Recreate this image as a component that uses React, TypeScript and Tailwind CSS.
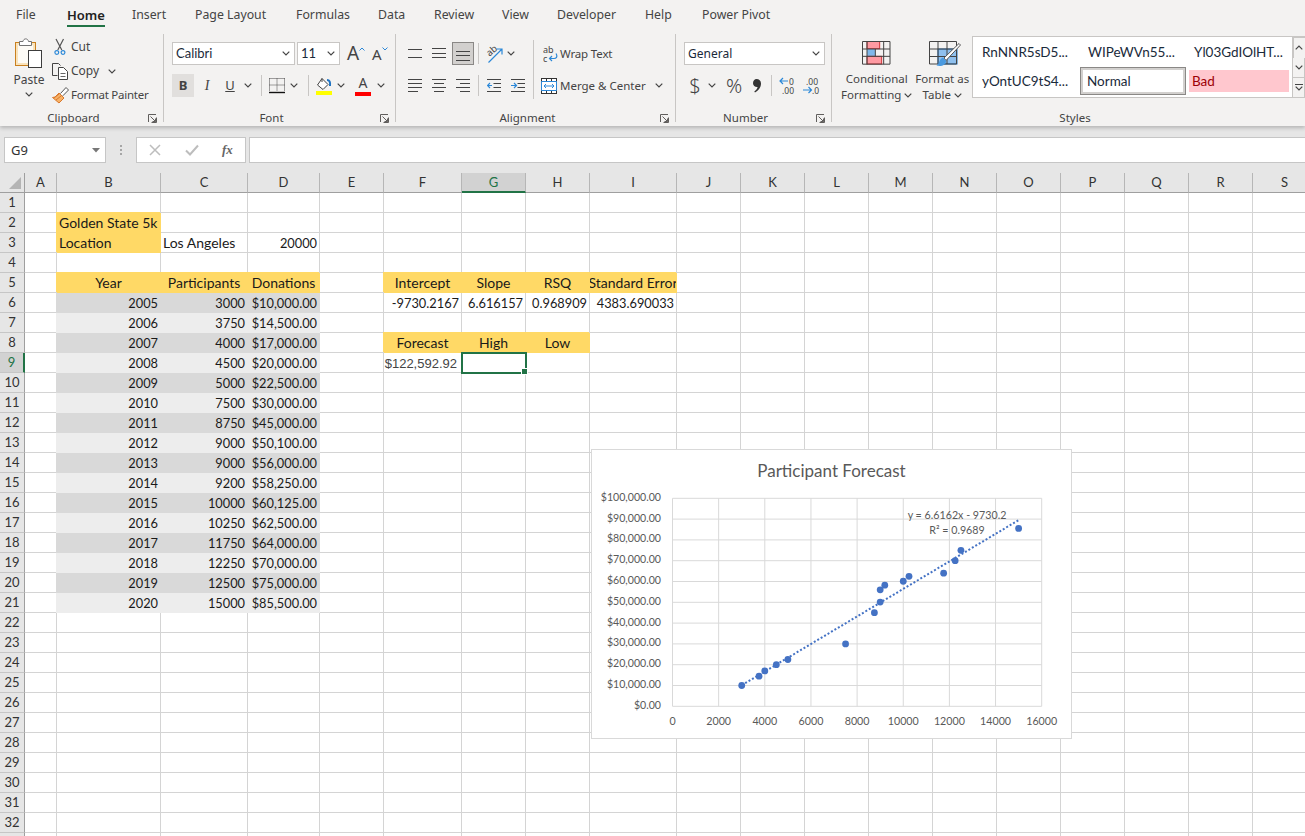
import React from "react";

const Chevron = ({ c = "#444" }: { c?: string }) => (
  <svg width="8" height="5" viewBox="0 0 8 5" className="shrink-0">
    <path d="M0.7 0.7 L4 4 L7.3 0.7" fill="none" stroke={c} strokeWidth="1.2" />
  </svg>
);

const Launcher = () => (
  <svg width="9" height="9" viewBox="0 0 9 9" className="absolute right-[6px] top-[4px]">
    <path d="M0.5 8V0.5H8M8.5 3.5V8.5H3.5M2.5 2.5L7.5 7.5M4.5 7.5H7.5V4.5" fill="none" stroke="#605e5c" strokeWidth="1" />
  </svg>
);

const Sep = () => <div className="self-start mt-[4px] h-[88px] w-px shrink-0 bg-[#c8c6c4]" />;
const MiniSep = () => <div className="h-[21px] w-px shrink-0 bg-[#c8c6c4]" />;

const GroupLabel = ({ text, launcher = true }: { text: string; launcher?: boolean }) => (
  <div className={`relative h-[16px] flex items-center justify-center text-[11.5px] text-[#444] ${launcher ? "pr-[16px]" : "pl-[13px]"}`}>
    {text}
    {launcher && <Launcher />}
  </div>
);

const Lines = ({ rows }: { rows: [number, number, number][] }) => (
  <svg width="14" height="16" viewBox="0 0 14 16">
    {rows.map(([a, b, y], i) => (
      <line key={i} x1={a} x2={b} y1={y} y2={y} stroke="#444" strokeWidth="1" />
    ))}
  </svg>
);

const PasteIcon = () => (
  <svg width="30" height="32" viewBox="16 37 30 32">
    <rect x="17.5" y="42.5" width="20" height="23" fill="#f9e3bb" stroke="#c9801f" />
    <rect x="20" y="45" width="15" height="18" fill="#fdfbf6" />
    <path d="M21.5 45.5V41.5H25C25.5 38 30 38 30.5 41.5H33.5V45.5Z" fill="#fff" stroke="#737373" />
    <rect x="30.5" y="50.5" width="13" height="17" fill="#fff" stroke="#3c3c3c" />
  </svg>
);

const CutIcon = () => (
  <svg width="18" height="18" viewBox="51 36 18 18">
    <path d="M56 37L61.8 48M63.5 37L57.8 48" stroke="#555" strokeWidth="1.2" fill="none" />
    <circle cx="56.8" cy="50.5" r="1.9" fill="none" stroke="#2b88d8" strokeWidth="1.2" />
    <circle cx="63" cy="50.5" r="1.9" fill="none" stroke="#2b88d8" strokeWidth="1.2" />
  </svg>
);

const CopyIcon = () => (
  <svg width="18" height="18" viewBox="51 60 18 18">
    <path d="M57.5 73.5H52.5V61.5H58.5L60.5 63.5" fill="none" stroke="#444" />
    <path d="M58.5 65.5H63.5L67.5 69.5V77.5H58.5Z" fill="#fff" stroke="#444" />
    <path d="M60.5 71.5H65.5M60.5 74.5H65.5" stroke="#666" />
  </svg>
);

const BrushIcon = () => (
  <svg width="19" height="18" viewBox="51 85 19 18">
    <path d="M60.5 92.5L66 86.5L68.5 89L62.8 94.8" fill="#fff" stroke="#555" />
    <path d="M59 92L64 97L59 102L52.5 96.5L55 96Z" fill="#f7b267" stroke="#d9782d" />
    <path d="M54 97L59 93M56 99L61 95" stroke="#d9782d" />
  </svg>
);

const BorderIcon = () => (
  <svg width="16" height="16" viewBox="0 0 16 16">
    <path d="M0.5 0.5H15.5M0.5 0.5V13M15.5 0.5V13M8 0.5V13M0.5 7H15.5" stroke="#444" strokeDasharray="1 1" fill="none" />
    <path d="M0 14.5H16" stroke="#111" strokeWidth="1.4" />
  </svg>
);

const FillIcon = () => (
  <svg width="17" height="18" viewBox="0 0 17 18">
    <path d="M6 1.5L12 7.5L7 12.5L1.5 8Z" fill="#fff" stroke="#444" />
    <path d="M6 1.5V5" stroke="#444" />
    <path d="M11 3C13.5 3 14.5 5 14 9" stroke="#1f73c2" strokeWidth="2" fill="none" />
    <rect x="0" y="14" width="16" height="4" fill="#ffff00" />
  </svg>
);

const OrientIcon = () => (
  <svg width="20" height="22" viewBox="-1 -1 20 22" className="-m-px">
    <text x="1" y="10" transform="rotate(-40 6 8)" className="font-['Noto_Sans',sans-serif] text-[9.5px] fill-[#444]">ab</text>
    <path d="M2.5 18.5L15.5 5.5M10.5 5H16V10.5" stroke="#2b88d8" strokeWidth="1.2" fill="none" />
  </svg>
);

const WrapIcon = () => (
  <svg width="15" height="20" viewBox="0 -1 15 20" className="-my-px">
    <text x="0" y="7.5" className="font-['Noto_Sans',sans-serif] text-[9px] fill-[#444]">ab</text>
    <text x="0" y="16.5" className="font-['Noto_Sans',sans-serif] text-[9px] fill-[#444]">c</text>
    <path d="M13 8.5C15 12 13 13.5 11 13.5H6.5M9 11L6.5 13.5L9 16" stroke="#2b88d8" strokeWidth="1.2" fill="none" />
  </svg>
);

const MergeIcon = () => (
  <svg width="16" height="16" viewBox="0 0 16 16">
    <rect x="0.5" y="0.5" width="15" height="15" fill="#fff" stroke="#333" />
    <path d="M5.5 0.5V3.5M10.5 0.5V3.5M5.5 12.5V15.5M10.5 12.5V15.5" stroke="#333" />
    <path d="M0.5 3.5H15.5V12.5H0.5Z" fill="#fff" stroke="#2b88d8" />
    <path d="M3 8H13M5 6L3 8L5 10M11 6L13 8L11 10" stroke="#2b88d8" fill="none" />
  </svg>
);

const IndentIcon = ({ dir }: { dir: "l" | "r" }) => (
  <svg width="14" height="14" viewBox="0 0 14 14">
    <path d="M0 0.5H14M6.5 4.5H14M6.5 8.5H14M0 12.5H14" stroke="#444" />
    {dir === "l" ? (
      <path d="M5 6.5H0.5M3 4L0.5 6.5L3 9" stroke="#2b88d8" strokeWidth="1.2" fill="none" />
    ) : (
      <path d="M0 6.5H5M3 4L5.5 6.5L3 9" stroke="#2b88d8" strokeWidth="1.2" fill="none" />
    )}
  </svg>
);

const CommaIcon = () => (
  <svg width="8" height="14" viewBox="0 0 8 14">
    <path d="M3.5 0C6 0 8 1.6 8 4.5C8 8.5 5 12 2 13.5L1.3 12.6C3 11.3 4.3 9.8 4.6 8C2.2 8.3 0 6.8 0 4.2C0 1.8 1.6 0 3.5 0Z" fill="#333" />
  </svg>
);

const DecIcon = ({ more }: { more: boolean }) => (
  <svg width="17" height="20" viewBox="0 -1 17 20" className="-my-px">
    {more ? (
      <>
        <path d="M9 4H1.2M4 1L1 4L4 7" stroke="#2b88d8" strokeWidth="1.2" fill="none" />
        <text x="10" y="7.5" className="font-['Noto_Sans',sans-serif] text-[8.5px] fill-[#444]">0</text>
        <text x="3" y="16.5" className="font-['Noto_Sans',sans-serif] text-[8.5px] fill-[#444]">.00</text>
      </>
    ) : (
      <>
        <text x="3" y="7.5" className="font-['Noto_Sans',sans-serif] text-[8.5px] fill-[#444]">.00</text>
        <path d="M0 13H8M5.5 10L8.5 13L5.5 16" stroke="#2b88d8" strokeWidth="1.2" fill="none" />
        <text x="9" y="16.5" className="font-['Noto_Sans',sans-serif] text-[8.5px] fill-[#444]">.0</text>
      </>
    )}
  </svg>
);

const CondIcon = () => (
  <svg width="29" height="24" viewBox="0 0 87 72">
    <rect x="15" y="1" width="38" height="22" fill="#ff9aa2" stroke="#d13438" strokeWidth="3" />
    <rect x="15" y="24" width="25" height="22" fill="#7fb7ea" />
    <rect x="15" y="46" width="44" height="23" fill="#ff9aa2" stroke="#d13438" strokeWidth="3" />
    <path d="M1.5 1.5H84V69.5H1.5ZM1.5 24H84M1.5 46H84M15 1V70M40 24V46M65 1V70" fill="none" stroke="#444" strokeWidth="3" />
  </svg>
);

const TableIcon = () => (
  <svg width="32" height="26" viewBox="0 0 32 26">
    <rect x="9" y="8" width="19" height="15" fill="#8fc0ee" stroke="#1f73c2" />
    <path d="M0.5 0.5H27.5V23H0.5ZM0.5 8H27.5M0.5 15.5H27.5M9 0.5V23M18 0.5V23" fill="none" stroke="#444" />
    <path d="M30 2.5L15 17L17 19.5L31.5 4Z" fill="#fff" stroke="#555" />
    <path d="M14 16.5C10 18 11 22 7.5 24.5C12 26 17.5 24 17 19.5Z" fill="#4a9ae0" />
  </svg>
);

function Ribbon() {
  const tabs: [string, number][] = [
    ["File", 51], ["Home", 65], ["Insert", 63], ["Page Layout", 101], ["Formulas", 82], ["Data", 56],
    ["Review", 68], ["View", 55], ["Developer", 88], ["Help", 57], ["Power Pivot", 100],
  ];
  return (
    <div className="relative z-20 h-[126px] bg-[#f3f2f1] shadow-[0_2px_4px_rgba(0,0,0,0.22)] text-[#444] font-['Noto_Sans',sans-serif] text-[11.5px]">
      <div className="flex h-[30px] pl-[16px] text-[12.3px]">
        {tabs.map(([t, w]) => (
          <div key={t} className="relative h-[30px] flex items-center pt-[1px]" style={{ width: w }}>
            <span className={t === "Home" ? "font-semibold text-[#222] text-[13px]" : ""}>{t}</span>
            {t === "Home" && <div className="absolute left-0 top-[25px] h-[2px] w-[38px] bg-[#217346]" />}
          </div>
        ))}
      </div>
      <div className="flex h-[96px]">
        {/* Clipboard */}
        <div className="w-[163px] shrink-0 flex flex-col">
          <div className="h-[80px] flex">
            <div className="ml-[12px] w-[34px] flex flex-col items-center pt-[7px]">
              <PasteIcon />
              <div className="mt-[3px] leading-[16px] text-[12px]">Paste</div>
              <div className="mt-[4px]"><Chevron /></div>
            </div>
            <div className="ml-[5px] flex flex-col pt-[5px]">
              <div className="flex h-[24px] items-center gap-[1px]"><CutIcon /><span className="ml-[1px] text-[12px]">Cut</span></div>
              <div className="flex h-[24px] items-center gap-[1px]"><CopyIcon /><span className="ml-[1px] text-[12px]">Copy</span><span className="ml-[8px]"><Chevron /></span></div>
              <div className="flex h-[24px] items-center"><BrushIcon /><span className="ml-[1px] tracking-[-0.25px]">Format Painter</span></div>
            </div>
          </div>
          <GroupLabel text="Clipboard" />
        </div>
        <Sep />
        {/* Font */}
        <div className="w-[231px] shrink-0 flex flex-col">
          <div className="h-[80px] pt-[12px] pl-[8px] flex flex-col gap-[9px]">
            <div className="flex h-[23px] items-center">
              <div className="h-[23px] w-[123px] bg-white border border-[#c8c6c4] flex items-center justify-between pl-[3px] pr-[4px] text-[#1a2a3a] font-['Lato',sans-serif] text-[13px]">Calibri<Chevron /></div>
              <div className="ml-[2px] h-[23px] w-[43px] bg-white border border-[#c8c6c4] flex items-center justify-between pl-[3px] pr-[4px] text-[#1a2a3a] font-['Lato',sans-serif] text-[13px]">11<Chevron /></div>
              <div className="ml-[7px] w-[25px] flex items-start h-[23px]">
                <span className="text-[19px] leading-[23px]">A</span>
                <svg width="6" height="4" viewBox="0 0 6 4" className="mt-[5px]"><path d="M0.5 3.5L3 1L5.5 3.5" stroke="#2b88d8" fill="none" /></svg>
              </div>
              <div className="flex items-start h-[23px]">
                <span className="text-[15px] leading-[25px]">A</span>
                <svg width="6" height="4" viewBox="0 0 6 4" className="mt-[5px]"><path d="M0.5 0.5L3 3L5.5 0.5" stroke="#2b88d8" fill="none" /></svg>
              </div>
            </div>
            <div className="flex h-[23px] items-center">
              <div className="h-[23px] w-[22px] bg-[#e1dfdd] flex items-center justify-center font-bold text-[13px]">B</div>
              <div className="ml-[1px] w-[24px] flex justify-center font-['Liberation_Serif',serif] italic text-[14px]">I</div>
              <div className="w-[22px] flex justify-center underline text-[13px]">U</div>
              <div className="w-[14px] flex justify-center"><Chevron /></div>
              <div className="ml-[6px]"><MiniSep /></div>
              <div className="ml-[7px]"><BorderIcon /></div>
              <div className="ml-[5px]"><Chevron /></div>
              <div className="ml-[10px]"><MiniSep /></div>
              <div className="ml-[7px] pt-[1px]"><FillIcon /></div>
              <div className="ml-[4px]"><Chevron /></div>
              <div className="ml-[10px] w-[16px] flex flex-col items-center">
                <span className="text-[14px] leading-[16px]">A</span>
                <div className="mt-[1px] h-[4px] w-[16px] bg-[#ff0000]" />
              </div>
              <div className="ml-[6px]"><Chevron /></div>
            </div>
          </div>
          <GroupLabel text="Font" />
        </div>
        <Sep />
        {/* Alignment */}
        <div className="w-[279px] shrink-0 flex flex-col">
          <div className="h-[80px] flex">
            <div className="w-[137px] shrink-0 pt-[12px] pl-[7px] flex flex-col gap-[9px]">
              <div className="flex h-[23px] items-center">
                <div className="w-[24px] flex justify-center"><Lines rows={[[0, 14, 3.5], [0, 14, 11.5]]} /></div>
                <div className="w-[24px] flex justify-center"><Lines rows={[[0, 14, 2.5], [0, 14, 7.5], [0, 14, 11.5]]} /></div>
                <div className="ml-[1px] h-[23px] w-[22px] bg-[#d2d0ce] border border-[#8a8886] flex items-center justify-center"><Lines rows={[[0, 14, 5.5], [0, 14, 9.5], [0, 14, 14.5]]} /></div>
                <div className="ml-[4px]"><MiniSep /></div>
                <div className="ml-[7px]"><OrientIcon /></div>
                <div className="ml-[3px]"><Chevron /></div>
              </div>
              <div className="flex h-[23px] items-center">
                <div className="w-[24px] flex justify-center"><Lines rows={[[0, 14, 1.5], [0, 14, 5.5], [0, 14, 9.5], [0, 10, 13.5]]} /></div>
                <div className="w-[24px] flex justify-center"><Lines rows={[[0, 14, 1.5], [2, 12, 5.5], [0, 14, 9.5], [2, 12, 13.5]]} /></div>
                <div className="w-[24px] flex justify-center"><Lines rows={[[0, 14, 1.5], [4, 14, 5.5], [0, 14, 9.5], [4, 14, 13.5]]} /></div>
                <div className="ml-[3px]"><MiniSep /></div>
                <div className="ml-[8px]"><IndentIcon dir="l" /></div>
                <div className="ml-[10px]"><IndentIcon dir="r" /></div>
              </div>
            </div>
            <div className="self-start mt-[10px] h-[59px] w-px bg-[#c8c6c4]" />
            <div className="pt-[12px] flex flex-col gap-[9px] pl-[7px]">
              <div className="flex h-[23px] items-center">
                <div className="w-[19px] pl-[2px]"><WrapIcon /></div>
                <span className="tracking-[-0.15px]">Wrap Text</span>
              </div>
              <div className="flex h-[23px] items-center">
                <div className="w-[19px]"><MergeIcon /></div>
                <span className="w-[95px]">Merge &amp; Center</span>
                <Chevron />
              </div>
            </div>
          </div>
          <GroupLabel text="Alignment" />
        </div>
        <Sep />
        {/* Number */}
        <div className="w-[155px] shrink-0 flex flex-col">
          <div className="h-[80px] pt-[12px] pl-[8px] flex flex-col gap-[9px]">
            <div className="h-[23px] w-[141px] bg-white border border-[#c8c6c4] flex items-center justify-between pl-[3px] pr-[4px] text-[#1a2a3a] text-[12px]">General<Chevron /></div>
            <div className="flex h-[23px] items-center">
              <span className="ml-[5px] w-[12px] text-center text-[20px] leading-[23px] font-light">$</span>
              <div className="ml-[7px]"><Chevron /></div>
              <span className="ml-[6px] w-[24px] text-center text-[20px] leading-[23px] font-light">%</span>
              <div className="ml-[7px]"><CommaIcon /></div>
              <div className="ml-[10px]"><MiniSep /></div>
              <div className="ml-[7px]"><DecIcon more /></div>
              <div className="ml-[7px]"><DecIcon more={false} /></div>
            </div>
          </div>
          <GroupLabel text="Number" />
        </div>
        <Sep />
        {/* Styles */}
        <div className="flex-1 min-w-0 flex flex-col">
          <div className="h-[80px] flex pl-[8px]">
            <div className="w-[74px] flex flex-col items-center pt-[11px]">
              <CondIcon />
              <div className="mt-[6px] leading-[16px] text-center whitespace-nowrap">Conditional</div>
              <div className="leading-[16px] flex items-center gap-[3px] whitespace-nowrap">Formatting<Chevron /></div>
            </div>
            <div className="w-[58px] flex flex-col items-center pt-[11px]">
              <div className="pl-[5px]"><TableIcon /></div>
              <div className="mt-[4px] leading-[16px] whitespace-nowrap">Format as</div>
              <div className="leading-[16px] flex items-center gap-[3px]">Table<Chevron /></div>
            </div>
            <div className="ml-[1px] mt-[6px] h-[62px] w-[321px] shrink-0 bg-white border border-[#c8c6c4] pt-[1px] pl-[1px] grid grid-cols-[106px_106px_106px] grid-rows-[28px_28px] gap-y-[1px] font-['Lato',sans-serif] text-[13.5px] text-[#1a2a3a]">
              <div className="flex items-center pl-[8px]">RnNNR5sD5...</div>
              <div className="flex items-center pl-[8px]">WIPeWVn55...</div>
              <div className="flex items-center pl-[8px]">Yl03GdIOlHT...</div>
              <div className="flex items-center pl-[8px]">yOntUC9tS4...</div>
              <div className="flex items-center pl-[6px] border border-[#8a8886] shadow-[inset_0_0_0_2px_#d2d0ce]">Normal</div>
              <div className="flex items-center"><div className="ml-[3px] h-[22px] w-[100px] bg-[#ffc7ce] text-[#9c0006] flex items-center pl-[3px]">Bad</div></div>
            </div>
            <div className="mt-[6px] h-[62px] w-[12px] shrink-0 flex flex-col border-y border-[#c8c6c4]">
              <div className="h-[21px] border-r border-b border-[#c8c6c4] flex items-center justify-center rotate-180"><Chevron /></div>
              <div className="h-[20px] border-r border-b border-[#c8c6c4] flex items-center justify-center"><Chevron /></div>
              <div className="h-[19px] border-r border-[#c8c6c4] flex flex-col items-center justify-center gap-[1px]"><div className="h-px w-[8px] bg-[#444]" /><Chevron /></div>
            </div>
          </div>
          <GroupLabel text="Styles" launcher={false} />
        </div>
      </div>
    </div>
  );
}

function FormulaBar() {
  return (
    <div className="h-[47px] bg-[#e6e6e6] pt-[11px] flex font-['Noto_Sans',sans-serif]">
      <div className="ml-[4px] h-[26px] w-[102px] bg-white border border-[#c6c6c6] flex items-center justify-between pl-[6px] pr-[5px] pt-[1px] text-[13px] text-[#333]">
        G9
        <svg width="8" height="5" viewBox="0 0 8 5"><path d="M0 0H8L4 4.5Z" fill="#777" /></svg>
      </div>
      <div className="ml-[13px] w-[4px] h-[26px] flex flex-col items-center justify-center gap-[2px]">
        <div className="h-[2px] w-[2px] bg-[#a6a6a6]" />
        <div className="h-[2px] w-[2px] bg-[#a6a6a6]" />
        <div className="h-[2px] w-[2px] bg-[#a6a6a6]" />
      </div>
      <div className="ml-[13px] h-[26px] w-[110px] bg-white border border-[#c6c6c6] flex items-center pl-[12px]">
        <svg width="12" height="12" viewBox="0 0 12 12"><path d="M1 1L11 11M11 1L1 11" stroke="#bdbdbd" strokeWidth="1.5" /></svg>
        <svg width="14" height="12" viewBox="0 0 14 12" className="ml-[24px]"><path d="M1 6.5L5 10.5L13 1.5" stroke="#bdbdbd" strokeWidth="2" fill="none" /></svg>
        <span className="ml-[23px] font-['Liberation_Serif',serif] italic font-bold text-[13px] text-[#666]">fx</span>
      </div>
      <div className="ml-[3px] h-[26px] flex-1 bg-white border-y border-l border-[#c6c6c6]" />
    </div>
  );
}

type Fill = "o" | "d" | "l" | "";
type Cell = { t: string; a: "l" | "r" | "c"; f?: Fill; arial?: boolean };

const table: [number, number, string][] = [
  [2005, 3000, "$10,000.00"], [2006, 3750, "$14,500.00"], [2007, 4000, "$17,000.00"], [2008, 4500, "$20,000.00"],
  [2009, 5000, "$22,500.00"], [2010, 7500, "$30,000.00"], [2011, 8750, "$45,000.00"], [2012, 9000, "$50,100.00"],
  [2013, 9000, "$56,000.00"], [2014, 9200, "$58,250.00"], [2015, 10000, "$60,125.00"], [2016, 10250, "$62,500.00"],
  [2017, 11750, "$64,000.00"], [2018, 12250, "$70,000.00"], [2019, 12500, "$75,000.00"], [2020, 15000, "$85,500.00"],
];

const cells: Record<string, Cell> = {
  B2: { t: "Golden State 5k", a: "l", f: "o" },
  B3: { t: "Location", a: "l", f: "o" },
  C3: { t: "Los Angeles", a: "l" },
  D3: { t: "20000", a: "r" },
  B5: { t: "Year", a: "c", f: "o" },
  C5: { t: "Participants", a: "c", f: "o" },
  D5: { t: "Donations", a: "c", f: "o" },
  F5: { t: "Intercept", a: "c", f: "o" },
  G5: { t: "Slope", a: "c", f: "o" },
  H5: { t: "RSQ", a: "c", f: "o" },
  I5: { t: "Standard Error", a: "c", f: "o" },
  F6: { t: "-9730.2167", a: "r" },
  G6: { t: "6.616157", a: "r" },
  H6: { t: "0.968909", a: "r" },
  I6: { t: "4383.690033", a: "r" },
  F8: { t: "Forecast", a: "c", f: "o" },
  G8: { t: "High", a: "c", f: "o" },
  H8: { t: "Low", a: "c", f: "o" },
  F9: { t: "$122,592.92", a: "r", arial: true },
};
table.forEach((r, i) => {
  const row = 6 + i;
  const f: Fill = i % 2 === 0 ? "d" : "l";
  cells[`B${row}`] = { t: String(r[0]), a: "r", f };
  cells[`C${row}`] = { t: String(r[1]), a: "r", f };
  cells[`D${row}`] = { t: r[2], a: "r", f };
});

const fillClass: Record<string, string> = {
  o: "bg-[#ffd966] border-[#ffd966] shadow-[-1px_-1px_0_0_#ffd966]",
  d: "bg-[#d9d9d9] border-[#d9d9d9] shadow-[-1px_0_0_0_#d9d9d9]",
  l: "bg-[#ededed] border-[#ededed] shadow-[-1px_0_0_0_#ededed]",
  "": "border-[#d4d4d4]",
};
const alignClass = { l: "justify-start", r: "justify-end", c: "justify-center" };

const cols = "ABCDEFGHIJKLMNOPQRS".split("");
const rows = Array.from({ length: 33 }, (_, i) => i + 1);

function Sheet() {
  return (
    <div className="relative flex-1 overflow-hidden bg-white">
      <div className="grid w-max grid-cols-[25px_32px_104px_87px_72px_64px_78px_64px_64px_87px_repeat(10,64px)] auto-rows-[20px] font-['Lato',sans-serif] text-[14px] leading-none text-[#1a1a1a]">
        <div className="bg-[#e6e6e6] border-r border-b border-[#9f9f9f] relative">
          <svg width="14" height="14" viewBox="0 0 14 14" className="absolute right-[2px] bottom-[2px]"><path d="M13 1V13H1Z" fill="#b4b4b4" /></svg>
        </div>
        {cols.map((c) => (
          <div key={c} className={`flex items-center justify-center border-r border-r-[#b6b6b6] ${c === "G" ? "bg-[#d2d2d2] border-b-2 border-b-[#217346] text-[#217346]" : "bg-[#e6e6e6] border-b border-b-[#9f9f9f] text-[#333]"} text-[13px]`}>
            {c}
          </div>
        ))}
        {rows.map((r) => (
          <React.Fragment key={r}>
            <div className={`flex items-center justify-center border-b border-b-[#c6c6c6] text-[13px] ${r === 9 ? "bg-[#d2d2d2] border-r-2 border-r-[#217346] text-[#217346]" : "bg-[#e6e6e6] border-r border-r-[#9f9f9f] text-[#333]"}`}>
              {r < 33 ? r : ""}
            </div>
            {cols.map((c) => {
              const cell = cells[`${c}${r}`];
              const f = cell?.f ?? "";
              const sel = c === "G" && r === 9;
              const numeric = cell ? /^[-$\d]/.test(cell.t) : false;
              return (
                <div key={c} className={`relative flex items-center px-[2px] border-r border-b whitespace-nowrap ${numeric ? "pt-[2px]" : ""} ${fillClass[f]} ${cell ? alignClass[cell.a] : ""} ${cell && c === "I" && r === 5 ? "overflow-hidden px-0" : ""}`}>
                  {cell && (
                    <span className={cell.arial ? "mr-[2px] font-['Liberation_Sans',sans-serif] text-[13px] text-[#444]" : numeric ? "text-[12.8px]" : ""}>{cell.t}</span>
                  )}
                  {sel && (
                    <div className="absolute -left-px -top-px z-10 h-[22px] w-[66px] border-2 border-[#217346]">
                      <div className="absolute -bottom-[3px] -right-[3px] h-[5px] w-[5px] bg-[#217346] border border-white box-content" />
                    </div>
                  )}
                </div>
              );
            })}
          </React.Fragment>
        ))}
      </div>
      <Chart />
    </div>
  );
}

const pts: [number, number][] = table.map((r) => [r[1], Number(r[2].replace(/[$,]/g, ""))]);
const X = (v: number) => 672.5 + (v / 16000) * 369.2;
const Y = (v: number) => 706.3 - (v / 100000) * 208;

function Chart() {
  const yTicks = Array.from({ length: 11 }, (_, i) => i * 10000);
  const xTicks = Array.from({ length: 9 }, (_, i) => i * 2000);
  return (
    <div className="absolute left-[591px] top-[276px] z-10 h-[290px] w-[481px] bg-white border border-[#d9d9d9]">
      <svg width="479" height="288" viewBox="592 450 479 288" className="block">
        <text x="831.5" y="477" textAnchor="middle" className="font-['Lato',sans-serif] text-[17px] fill-[#595959]">Participant Forecast</text>
        {yTicks.map((v) => (
          <g key={v}>
            <line x1="672.5" x2="1041.7" y1={Y(v)} y2={Y(v)} stroke="#d9d9d9" />
            <text x="661" y={Y(v) + 2.5} textAnchor="end" className="font-['Lato',sans-serif] text-[10.6px] fill-[#595959]">
              {"$" + v.toLocaleString("en-US") + ".00"}
            </text>
          </g>
        ))}
        {xTicks.map((v) => (
          <g key={v}>
            <line x1={X(v)} x2={X(v)} y1="498.3" y2="706.3" stroke="#d9d9d9" />
            <text x={X(v)} y="725" textAnchor="middle" className="font-['Lato',sans-serif] text-[10.7px] fill-[#595959]">{v}</text>
          </g>
        ))}
        <line x1={X(3000)} y1={Y(10119)} x2={X(15000)} y2={Y(89512)} stroke="#4472c4" strokeWidth="2" strokeDasharray="2 2" />
        {pts.map(([x, y], i) => (
          <circle key={i} cx={X(x)} cy={Y(y)} r="3.4" fill="#4472c4" />
        ))}
        <text x="957" y="519" textAnchor="middle" className="font-['Lato',sans-serif] text-[10.7px] fill-[#595959]">y = 6.6162x - 9730.2</text>
        <text x="957" y="534" textAnchor="middle" className="font-['Lato',sans-serif] text-[10.7px] fill-[#595959]">R² = 0.9689</text>
      </svg>
    </div>
  );
}

export default function App() {
  return (
    <div className="h-screen w-full overflow-hidden flex flex-col bg-white">
      <Ribbon />
      <FormulaBar />
      <Sheet />
    </div>
  );
}
